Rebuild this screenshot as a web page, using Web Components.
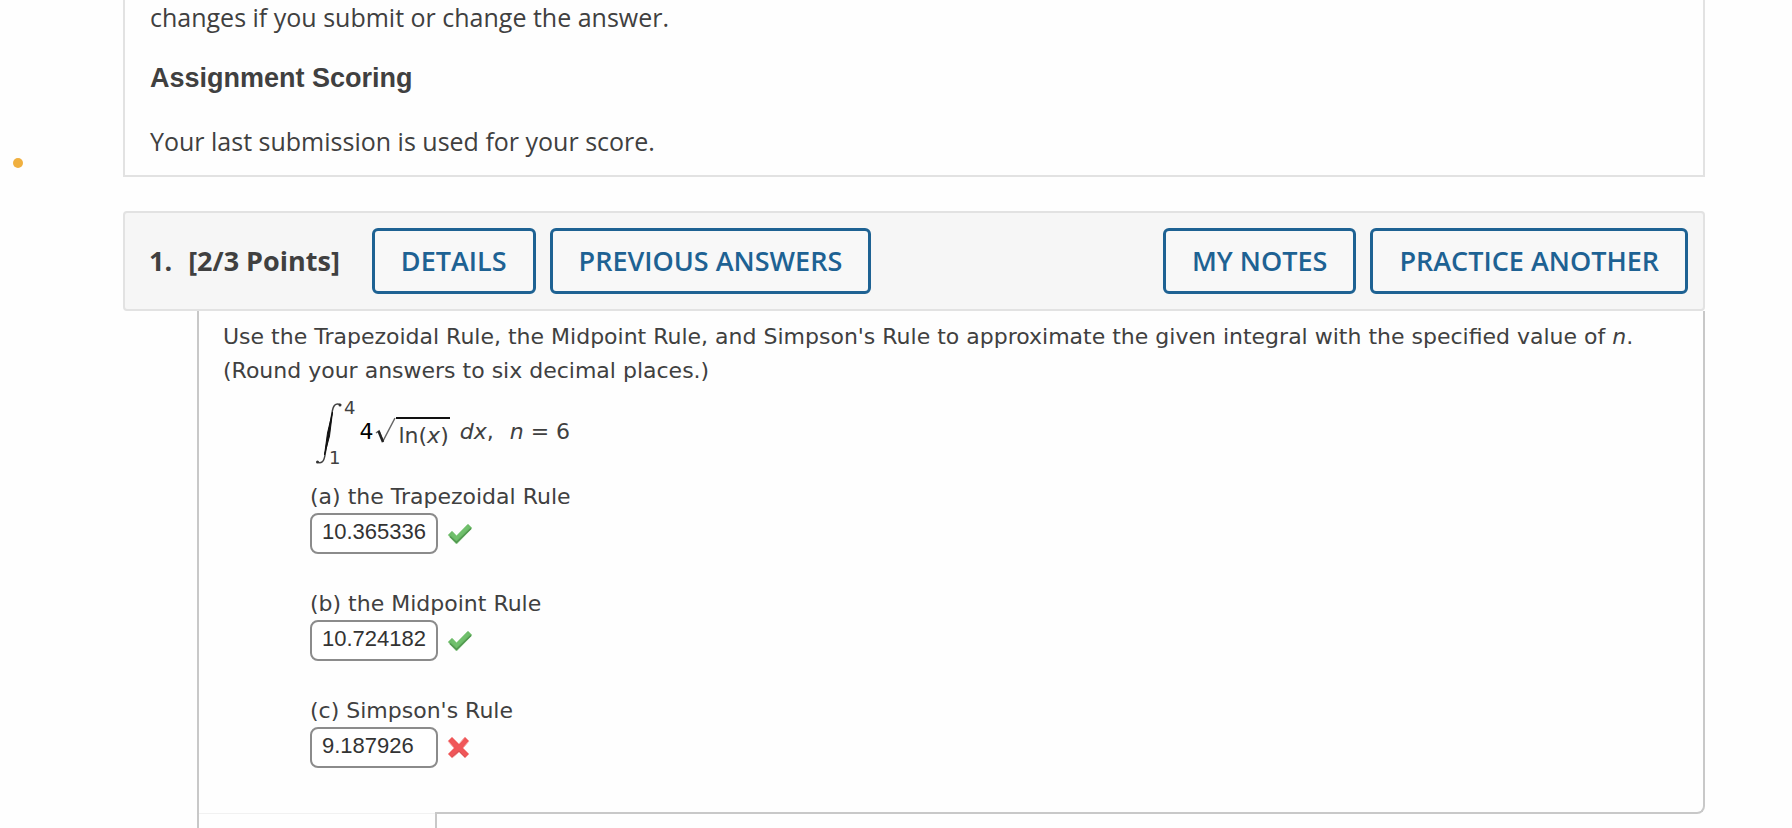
<!DOCTYPE html>
<html lang="en">
<head>
<meta charset="utf-8">
<title>Assignment</title>
<style>
body{margin:0;background:#fefefe;color:#404040;font-family:"Open Sans",sans-serif;font-size:25px;overflow-x:hidden}
</style>
</head>
<body>
<assignment-page></assignment-page>
<script>
const define=(name,html,setup)=>customElements.define(name,class extends HTMLElement{
  connectedCallback(){
    if(this.shadowRoot)return;
    this.attachShadow({mode:"open"}).innerHTML=html;
    if(setup)setup(this,this.shadowRoot);
  }
});

define("scoring-info",`<style>
:host{display:block;box-sizing:border-box;border:2px solid #e2e2e2;border-top:0;padding:0 25px 17px}
p,h2{margin:0}
p{font-size:25px;line-height:34px}
h2{font:bold 27px/36px "Liberation Sans",sans-serif;margin:26px 0 28px}
</style><p>changes if you submit or change the answer.</p>
<h2>Assignment Scoring</h2>
<p>Your last submission is used for your score.</p>`);

define("action-button",`<style>
:host{display:block}
button{box-sizing:border-box;height:66px;padding:0 26px;border:3px solid #1e6293;border-radius:6px;background:#f8f8f8;color:#1e6293;font:600 27px/34px "Open Sans",sans-serif;white-space:nowrap}
</style><button type="button"><slot></slot></button>`);

define("question-header",`<style>
:host{display:flex;align-items:center;box-sizing:border-box;gap:14px;height:100px;padding:0 15px 0 24px;border:2px solid #e2e2e2;border-radius:4px;background:#f6f6f6}
h3{margin:0 18px 0 0;font:bold 27px/34px "Open Sans",sans-serif;display:flex;gap:16px;white-space:nowrap}
.space{flex:1}
</style><h3><span>1.</span><span>[2/3 Points]</span></h3>
<action-button>DETAILS</action-button><action-button>PREVIOUS ANSWERS</action-button>
<span class="space"></span>
<action-button>MY NOTES</action-button><action-button>PRACTICE ANOTHER</action-button>`);

define("integral-formula",`<style>
:host{display:flex;align-items:flex-start;height:68px;font-size:22px;line-height:30px;white-space:nowrap}
.limits{display:flex;flex-direction:column;justify-content:space-between;height:68px;font-size:18px;line-height:18px;margin-left:-14px}
.upper{padding-left:15px}
.coef{color:#000;margin:18px 2px 0 4px}
.root{margin-top:18px}
.radicand{border-top:2px solid #111;margin-top:18px;padding:2px 1px 0 2px}
.dx{margin:18px 16px 0 10px}
.eq{margin-top:18px}
svg{display:block;flex:none}
</style>
<svg width="28" height="68" viewBox="0 0 28 68" aria-hidden="true"><path d="M26 6C20 3 18 7 17 14L10 56C9 63 6 65 2 63" fill="none" stroke="#444" stroke-width="1.5"/><path d="M17.500 13L14.500 37L9.500 56L12.500 34Z" fill="#111" stroke="#111"/><circle cx="25" cy="6" r="1.500" fill="#333"/><circle cx="2.500" cy="63" r="1.500" fill="#333"/></svg>
<span class="limits"><span class="upper">4</span><span>1</span></span>
<span class="coef">4</span>
<svg class="root" width="21" height="28" viewBox="0 0 21 28" aria-hidden="true"><path d="M1 16L4 14L8 24L20 1" fill="none" stroke="#666" stroke-width="1.500"/><path d="M3.500 14L8 25" stroke="#222" stroke-width="2.500"/></svg>
<span class="radicand">ln(<i>x</i>)</span>
<span class="dx"><i>dx</i>,</span><span class="eq"><i>n</i> = 6</span>`);

define("answer-mark",`<style>
:host{display:block}svg{display:block}
</style><svg width="26" height="24" viewBox="0 0 26 24" role="img"></svg>`,(host,root)=>{
  const right=host.getAttribute("result")==="correct",svg=root.querySelector("svg");
  svg.setAttribute("aria-label",right?"Correct":"Incorrect");
  svg.innerHTML=right
   ?'<path d="M1 13L5 9L9.500 14L21 2L25 6L9.500 22Z" fill="#6cba68" stroke="#a5d6a2"/><path d="M3 14.500L9.500 20.500L24 6.500" fill="none" stroke="#4f964d" stroke-width="1.500"/><path d="M5 11.500L9.500 16L21 4.500" fill="none" stroke="#70c06c" stroke-width="3"/>'
   :'<path d="M1 5L5 1L12 8L18 1L22 5L16 12L22 18L18 22L12 16L5 22L1 18L7 12Z" fill="#ef5557" stroke="#f6a3a3"/><path d="M4 5L19 19M19 5L4 19" stroke="#f0575a" stroke-width="3"/><path d="M5 21L12 15L18 21" fill="none" stroke="#d65355"/>';
});

define("answer-field",`<style>
:host{display:block}
label{display:block;line-height:32px}
div{display:flex;align-items:center;gap:9px}
input{box-sizing:border-box;width:128px;height:41px;border:2px solid #8b8b8b;border-radius:8px;margin:0;padding:0 10px 3px;background:#fff;color:#333;font:22px "Liberation Sans",sans-serif}
</style><label for="answer"><slot></slot></label><div><input id="answer" type="text"><answer-mark></answer-mark></div>`,(host,root)=>{
  root.querySelector("input").value=host.getAttribute("value");
  const old=root.querySelector("answer-mark"),mark=document.createElement("answer-mark");
  mark.setAttribute("result",host.getAttribute("result"));
  old.replaceWith(mark);
});

define("question-body",`<style>
:host{display:block;margin-left:74px;border-left:2px solid #c8c8c8;font-family:Verdana,"DejaVu Sans",sans-serif;font-size:22px}
.panel{border-right:2px solid #c8c8c8;padding:9px 24px 36px}
p{margin:0;line-height:34px}
.work{padding-left:87px}
integral-formula{margin:11px 0 14px 5px}
.answers{display:grid;gap:34px}
.end{display:grid;grid-template-columns:236px 1fr}
.end span:first-child{border-bottom:1px solid #f1f1f1}
.end span:last-child{height:8px;border:solid #c8c8c8;border-width:0 2px 2px 0;border-radius:0 0 8px 0}
.next{height:15px;margin-left:236px;border-left:2px solid #c8c8c8}
</style>
<div class="panel"><p>Use the Trapezoidal Rule, the Midpoint Rule, and Simpson's Rule to approximate the given integral with the specified value of <i>n</i>.<br>(Round your answers to six decimal places.)</p>
<div class="work"><integral-formula></integral-formula>
<div class="answers">
<answer-field value="10.365336" result="correct">(a) the Trapezoidal Rule</answer-field>
<answer-field value="10.724182" result="correct">(b) the Midpoint Rule</answer-field>
<answer-field value="9.187926" result="incorrect">(c) Simpson's Rule</answer-field>
</div></div></div>
<div class="end"><span></span><span></span></div><div class="next"></div>`);

define("assignment-page",`<style>
:host{display:block;position:relative;padding:0 87px 0 123px}
question-header{margin-top:34px}
.dot{position:absolute;left:13px;top:158px;width:10px;height:10px;border-radius:50%;background:#f0b040}
</style><span class="dot"></span><scoring-info></scoring-info><question-header></question-header><question-body></question-body>`);
</script>
</body>
</html>
